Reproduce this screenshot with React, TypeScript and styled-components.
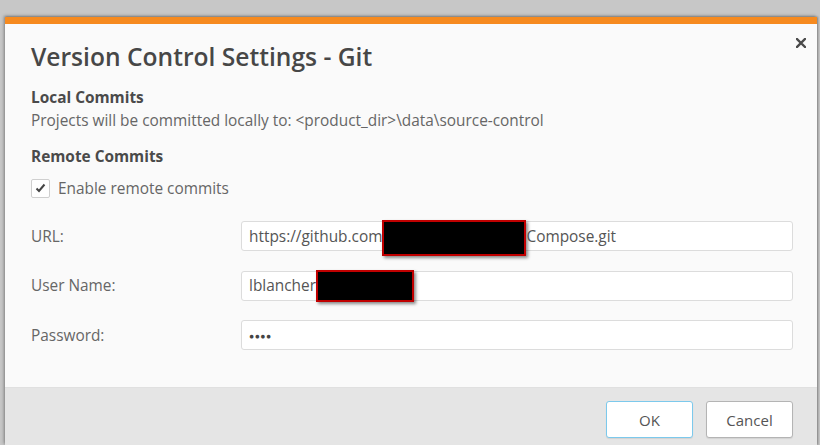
import React from "react";
import styled, { createGlobalStyle } from "styled-components";

const Global = createGlobalStyle`
  html, body { margin: 0; padding: 0; height: 100%; }
  body { background: #c7c7c7; font-family: "Open Sans", "Noto Sans", sans-serif; overflow: hidden; }
  #root { height: 100%; }
`;

const Page = styled.div`
  height: 445px;
  box-sizing: border-box;
  padding: 17px 3px 0 5px;
  background: #c7c7c7;
  display: flex;
`;

const Dialog = styled.div`
  flex: 1;
  display: flex;
  flex-direction: column;
  background: #fafafa;
  border-top: 7px solid #f68a1f;
  box-shadow: -1px -1px 3px rgba(0, 0, 0, 0.35), 1px 0 2px rgba(0, 0, 0, 0.3);
`;

const Body = styled.div`
  flex: 1;
  display: flex;
  flex-direction: column;
  padding: 14px 11px 0 26px;
`;

const Header = styled.div`
  display: flex;
  justify-content: space-between;
  align-items: flex-start;
`;

const Title = styled.h1`
  margin: 4px 0 0 0;
  font-size: 24.6px;
  line-height: 30px;
  font-weight: 600;
  color: #474747;
`;

const Close = styled.button`
  border: 0;
  background: none;
  padding: 0;
  width: 10px;
  height: 10px;
  display: flex;
  color: #4a4a4a;
`;

const Content = styled.div`
  display: flex;
  flex-direction: column;
  padding-right: 13px;
`;

const SectionTitle = styled.div<{ $top: number }>`
  margin-top: ${(p) => p.$top}px;
  font-size: 15.4px;
  line-height: 20px;
  font-weight: 700;
  color: #4a4a4a;
`;

const Text = styled.div`
  margin-top: 3px;
  font-size: 15.4px;
  line-height: 20px;
  color: #666;
`;

const CheckRow = styled.label`
  margin-top: 11px;
  display: flex;
  align-items: center;
  gap: 8px;
  height: 20px;
  font-size: 15.4px;
  color: #666;
`;

const Box = styled.span`
  width: 19px;
  height: 19px;
  box-sizing: border-box;
  border: 1px solid #cfcfcf;
  border-radius: 2px;
  background: #fff;
  display: flex;
  align-items: center;
  justify-content: center;
`;

const Form = styled.div`
  margin-top: 23px;
  display: grid;
  grid-template-columns: 210px 1fr;
  row-gap: 19.5px;
  align-items: center;
`;

const Label = styled.div`
  font-size: 15.4px;
  color: #666;
`;

const Field = styled.div`
  height: 30px;
  box-sizing: border-box;
  border: 1px solid #dcdcdc;
  border-radius: 3px;
  background: #fff;
  display: flex;
  align-items: center;
  padding-left: 7px;
  font-size: 15.4px;
  color: #555;
  white-space: nowrap;
`;

const Redacted = styled.span<{ $w: number; $h: number; $dy: number }>`
  flex: none;
  width: ${(p) => p.$w}px;
  height: ${(p) => p.$h}px;
  margin-top: ${(p) => p.$dy}px;
  box-sizing: border-box;
  background: #000;
  border: 2px solid #c00000;
  box-shadow: 2px 2px 3px rgba(0, 0, 0, 0.45);
`;

const Dots = styled.span`
  font-size: 8.5px;
  letter-spacing: 0.5px;
  color: #444;
`;

const Footer = styled.div`
  height: 58px;
  box-sizing: border-box;
  background: #e5e5e5;
  border-top: 1px solid #e0e0e0;
  display: flex;
  justify-content: flex-end;
  align-items: flex-start;
  gap: 13px;
  padding: 13px 24px 0 0;
`;

const Button = styled.button<{ $primary?: boolean }>`
  width: 87px;
  height: 37px;
  box-sizing: border-box;
  background: #fff;
  border: 1px solid ${(p) => (p.$primary ? "#7cc9ec" : "#b4b4b4")};
  border-radius: 3px;
  font-family: "Open Sans", sans-serif;
  font-size: 15px;
  color: #555;
  box-shadow: 0 1px 1px rgba(0, 0, 0, 0.08);
`;

export default function App() {
  return (
    <>
      <Global />
      <Page>
        <Dialog>
          <Body>
            <Header>
              <Title>Version Control Settings - Git</Title>
              <Close aria-label="close">
                <svg width="10" height="10" viewBox="0 0 10 10">
                  <path d="M1 1L9 9M9 1L1 9" stroke="currentColor" strokeWidth="2.4" strokeLinecap="square" />
                </svg>
              </Close>
            </Header>
            <Content>
              <SectionTitle $top={16}>Local Commits</SectionTitle>
              <Text>Projects will be committed locally to: &lt;product_dir&gt;\data\source-control</Text>
              <SectionTitle $top={16}>Remote Commits</SectionTitle>
              <CheckRow>
                <Box>
                  <svg width="11" height="10" viewBox="0 0 11 10">
                    <path d="M1.5 5.5L4 8L9.5 1.5" fill="none" stroke="#444" strokeWidth="2" />
                  </svg>
                </Box>
                Enable remote commits
              </CheckRow>
              <Form>
                <Label>URL:</Label>
                <Field>
                  https://github.com
                  <Redacted $w={144} $h={36} $dy={4} />
                  Compose.git
                </Field>
                <Label>User Name:</Label>
                <Field>
                  lblancher
                  <Redacted $w={98} $h={32} $dy={0} />
                </Field>
                <Label>Password:</Label>
                <Field>
                  <Dots>●●●●</Dots>
                </Field>
              </Form>
            </Content>
          </Body>
          <Footer>
            <Button $primary>OK</Button>
            <Button>Cancel</Button>
          </Footer>
        </Dialog>
      </Page>
    </>
  );
}
